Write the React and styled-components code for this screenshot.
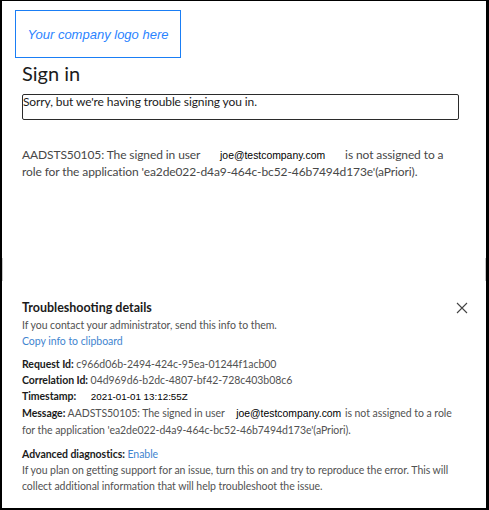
import React from "react";
import styled, { createGlobalStyle } from "styled-components";

const GlobalStyle = createGlobalStyle`
  html, body { margin: 0; padding: 0; background: #000; }
  body { font-family: Lato, "Segoe UI", sans-serif; }
`;

const Frame = styled.div`
  box-sizing: border-box;
  width: 489px;
  height: 510px;
  background: #fff;
  border-style: solid;
  border-color: #000;
  border-width: 1px 3px 2px 2px;
  display: flex;
  flex-direction: column;
  position: relative;

  &::before,
  &::after {
    content: "";
    position: absolute;
    top: 257px;
    width: 1px;
    height: 23px;
    background: #c8c8c8;
  }
  &::before { left: 0; }
  &::after { right: 0; }
`;

const Top = styled.div`
  padding: 9px 0 0 13px;
`;

const Logo = styled.div`
  box-sizing: border-box;
  width: 166px;
  height: 48px;
  border: 1px solid #1a7ef5;
  display: flex;
  align-items: center;
  justify-content: center;
  font-family: "Liberation Sans", Arial, sans-serif;
  font-style: italic;
  font-size: 13px;
  color: #2a83ff;
`;

const Content = styled.div`
  padding-left: 7px;
  padding-right: 27px;
`;

const Title = styled.h1`
  margin: 2px 0 0;
  font-size: 20px;
  font-weight: 400;
  color: #1b1b1b;
  line-height: 26px;
`;

const AlertBox = styled.div`
  box-sizing: border-box;
  margin-top: 8px;
  height: 26px;
  border: 1.5px solid #2b2b2b;
  border-radius: 2px;
  font-size: 12px;
  letter-spacing: -0.1px;
  line-height: 14px;
  color: #1b1b1b;
  white-space: nowrap;
`;

const ErrorText = styled.p`
  margin: 27px 0 0;
  font-size: 12px;
  letter-spacing: -0.1px;
  line-height: 16px;
  color: #474747;
  white-space: nowrap;
`;

const Plain = styled.span`
  display: inline-block;
  font-family: "Liberation Sans", Arial, sans-serif;
  letter-spacing: 0;
  color: #000;
  font-size: ${(p) => p.$size || 10.4}px;
  margin: 0 ${(p) => p.$right || 0}px 0 ${(p) => p.$left || 0}px;
`;

const Panel = styled.div`
  margin-top: auto;
  padding: 0 20px 14px 20px;
  position: relative;
`;

const PanelTitle = styled.h2`
  margin: 0;
  font-size: 12.5px;
  font-weight: 700;
  color: #1b1b1b;
  line-height: 16px;
`;

const Close = styled.button`
  position: absolute;
  right: 18px;
  top: 2px;
  border: none;
  background: none;
  padding: 0;
  width: 12px;
  height: 12px;
  display: flex;
  cursor: pointer;
`;

const Small = styled.div`
  font-size: 10.5px;
  letter-spacing: -0.05px;
  line-height: 16px;
  color: #525252;
  white-space: nowrap;
  margin-top: ${(p) => p.$gap || 0}px;
`;

const Link = styled.a`
  color: #3f85cf;
  text-decoration: none;
`;

const Label = styled.b`
  font-weight: 700;
  color: #1b1b1b;
`;

const Details = styled.div`
  margin-top: 7px;
`;

export default function App() {
  return (
    <>
      <GlobalStyle />
      <Frame>
        <Top>
          <Logo>Your company logo here</Logo>
          <Content>
            <Title>Sign in</Title>
            <AlertBox>Sorry, but we're having trouble signing you in.</AlertBox>
            <ErrorText>
              AADSTS50105: The signed in user <Plain $left={17} $right={17}>joe@testcompany.com</Plain> is not assigned to a
              <br />
              role for the application 'ea2de022-d4a9-464c-bc52-46b7494d173e'(aPriori).
            </ErrorText>
          </Content>
        </Top>
        <Panel>
          <PanelTitle>Troubleshooting details</PanelTitle>
          <Close aria-label="Close">
            <svg width="12" height="12" viewBox="0 0 12 12">
              <path d="M1 1L11 11M11 1L1 11" stroke="#444" strokeWidth="1.1" fill="none" />
            </svg>
          </Close>
          <Small $gap={1}>If you contact your administrator, send this info to them.</Small>
          <Small>
            <Link href="#">Copy info to clipboard</Link>
          </Small>
          <Details>
            <Small>
              <Label>Request Id:</Label> c966d06b-2494-424c-95ea-01244f1acb00
            </Small>
            <Small>
              <Label>Correlation Id:</Label> 04d969d6-b2dc-4807-bf42-728c403b08c6
            </Small>
            <Small>
              <Label>Timestamp:</Label> <Plain $size={9.8} $left={12}>2021-01-01 13:12:55Z</Plain>
            </Small>
            <Small>
              <Label>Message:</Label> AADSTS50105: The signed in user <Plain $left={9} $right={1}>joe@testcompany.com</Plain> is not assigned to a role
              <br />
              for the application 'ea2de022-d4a9-464c-bc52-46b7494d173e'(aPriori).
            </Small>
          </Details>
          <Small $gap={8}>
            <Label>Advanced diagnostics:</Label> <Link href="#">Enable</Link>
          </Small>
          <Small>
            If you plan on getting support for an issue, turn this on and try to reproduce the error. This will
            <br />
            collect additional information that will help troubleshoot the issue.
          </Small>
        </Panel>
      </Frame>
    </>
  );
}
